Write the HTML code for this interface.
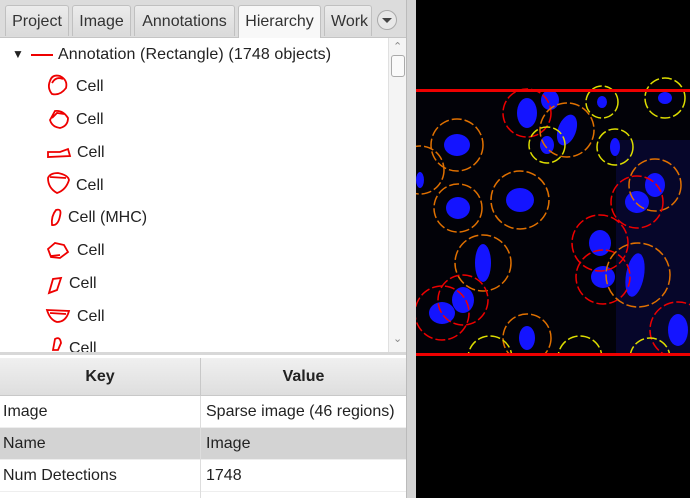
<!DOCTYPE html><html><head><style>
html,body{margin:0;width:690px;height:498px;overflow:hidden}
body{background:#000;font-family:"Liberation Sans",sans-serif;position:relative}
.l{position:absolute;left:0;top:0;width:406px;height:498px;background:#fff;overflow:hidden}
.tabs{position:absolute;left:0;top:0;width:406px;height:37px;background:#dcdcdc;border-bottom:1px solid #c4c4c4}
.tab{position:absolute;top:5px;height:31px;background:linear-gradient(#ececec,#dadada);border:1px solid #c0c0c0;border-bottom:none;border-radius:3px 3px 0 0;font-size:16px;color:#333;line-height:31px;text-align:center;box-sizing:border-box}
.tree{position:absolute;left:0;top:38px;width:388px;height:314px;overflow:hidden;font-size:16px;color:#222}
.r{position:absolute;white-space:nowrap}
.sb{position:absolute;left:388px;top:38px;width:18px;height:314px;background:#f4f4f4;border-left:1px solid #e0e0e0;box-sizing:border-box}
.tbl{position:absolute;left:0;top:355px;width:406px;height:143px;overflow:hidden;font-size:16px;color:#222}
.row{position:absolute;left:0;width:406px;height:32px;line-height:32px;border-bottom:1px solid #eee;box-sizing:border-box}
.c1{position:absolute;left:3px}.c2{position:absolute;left:206px}
.div{position:absolute;left:200px;top:0;width:1px;height:32px;background:#ddd}
</style></head><body>
<div class="l">
<div class="tabs">
<div class="tab" style="left:5px;width:64px">Project</div>
<div class="tab" style="left:72px;width:59px">Image</div>
<div class="tab" style="left:134px;width:101px">Annotations</div>
<div class="tab" style="left:238px;width:83px;background:#f8f8f8;height:33px">Hierarchy</div>
<div class="tab" style="left:324px;width:48px;text-align:left;padding-left:6px;overflow:hidden">Work</div>
<div style="position:absolute;left:377px;top:10px;width:20px;height:20px;border-radius:50%;border:1px solid #aaa;background:#e8e8e8;box-sizing:border-box"><div style="position:absolute;left:4px;top:7px;border-left:5px solid transparent;border-right:5px solid transparent;border-top:5px solid #444"></div></div>
</div>
<div class="tree">
<div class="r" style="left:12px;top:9px;font-size:12px">▼</div>
<div style="position:absolute;left:31px;top:16px;width:22px;height:2px;background:#e00"></div>
<div class="r" style="left:58px;top:8px;letter-spacing:0.1px">Annotation (Rectangle) (1748 objects)</div>
<svg style="position:absolute;left:0;top:0" width="80" height="314" fill="none" stroke="#e00" stroke-width="1.8">
<path d="M50 43 Q52 36 60 38 Q68 42 66 50 Q60 58 52 56 Q47 50 50 43Z M52 45 Q56 38 63 41"/>
<path d="M50 82 L55 73 Q63 72 68 80 Q68 88 60 90 Q52 89 50 82Z M52 80 L57 75 L64 76"/>
<path d="M48 119 L48 114 L60 114 L68 111 L70 118 L48 119Z"/>
<path d="M48 140 Q50 135 58 135 Q68 137 69 142 Q66 152 57 155 Q48 150 48 140Z M50 139 L66 140"/>
<path d="M52 187 Q51 178 56 172 Q62 170 60 178 Q58 188 52 187Z"/>
<path d="M48 211 L55 205 L64 207 L68 214 L60 220 L51 219Z M51 218 L60 217"/>
<path d="M49 255 L53 241 L61 240 L57 252 Z"/>
<path d="M47 272 L69 273 Q66 284 57 284 Q50 282 47 272Z M50 275 L66 276"/>
<path d="M53 312 L55 301 Q60 298 61 305 L58 312Z"/>
</svg>
<div class="r" style="left:76px;top:40px">Cell</div>
<div class="r" style="left:76px;top:73px">Cell</div>
<div class="r" style="left:77px;top:106px">Cell</div>
<div class="r" style="left:76px;top:139px">Cell</div>
<div class="r" style="left:68px;top:171px">Cell (MHC)</div>
<div class="r" style="left:77px;top:204px">Cell</div>
<div class="r" style="left:69px;top:237px">Cell</div>
<div class="r" style="left:77px;top:270px">Cell</div>
<div class="r" style="left:69px;top:302px">Cell</div>
</div>
<div class="sb"><div style="position:absolute;left:4px;top:2px;font-size:11px;color:#888">⌃</div>
<div style="position:absolute;left:2px;top:17px;width:12px;height:20px;border:1px solid #aaa;border-radius:3px;background:#fafafa"></div>
<div style="position:absolute;left:4px;top:294px;font-size:11px;color:#888">⌄</div></div>
<div style="position:absolute;left:0;top:352px;width:406px;height:3px;background:#d8d8d8"></div>
<div class="tbl">
<div class="row" style="top:3px;height:38px;line-height:37px;background:linear-gradient(#f0f0f0,#dedede);font-weight:bold;border-bottom:1px solid #c8c8c8"><div style="position:absolute;left:0;width:200px;text-align:center">Key</div><div style="position:absolute;left:201px;width:205px;text-align:center">Value</div><div class="div" style="height:37px;background:#c8c8c8"></div></div>
<div class="row" style="top:41px"><span class="c1">Image</span><span class="c2">Sparse image (46 regions)</span><div class="div"></div></div>
<div class="row" style="top:73px;background:#d3d3d3"><span class="c1">Name</span><span class="c2">Image</span><div class="div"></div></div>
<div class="row" style="top:105px"><span class="c1">Num Detections</span><span class="c2">1748</span><div class="div"></div></div>
<div class="row" style="top:137px;height:6px;border-bottom:none"><div class="div" style="height:6px"></div></div>
</div>
</div>
<div style="position:absolute;left:406px;top:0;width:10px;height:498px;background:#d4d4d4;border-left:1px solid #bbb;box-sizing:border-box"></div>
<svg style="position:absolute;left:416px;top:0" width="274" height="498">
<rect x="0" y="91" width="274" height="264" fill="#020208"/>
<rect x="200" y="140" width="74" height="215" fill="#06062a"/>
<g transform="translate(-416,0)">
<g fill="#1414ff">
<ellipse cx="527" cy="113" rx="10" ry="15"/><ellipse cx="550" cy="100" rx="9" ry="10"/><ellipse cx="567" cy="130" rx="9" ry="16" transform="rotate(20 567 130)"/><ellipse cx="547" cy="145" rx="7" ry="9"/>
<ellipse cx="457" cy="145" rx="13" ry="11"/><ellipse cx="602" cy="102" rx="5" ry="6"/><ellipse cx="615" cy="147" rx="5" ry="9"/><ellipse cx="665" cy="98" rx="7" ry="6"/>
<ellipse cx="655" cy="185" rx="10" ry="12"/><ellipse cx="637" cy="202" rx="12" ry="11"/><ellipse cx="458" cy="208" rx="12" ry="11"/><ellipse cx="520" cy="200" rx="14" ry="12"/>
<ellipse cx="600" cy="243" rx="11" ry="13"/><ellipse cx="603" cy="277" rx="12" ry="11"/><ellipse cx="635" cy="275" rx="9" ry="22" transform="rotate(10 635 275)"/><ellipse cx="483" cy="263" rx="8" ry="19"/>
<ellipse cx="463" cy="300" rx="11" ry="13"/><ellipse cx="442" cy="313" rx="13" ry="11"/><ellipse cx="527" cy="338" rx="8" ry="12"/><ellipse cx="678" cy="330" rx="10" ry="16"/><ellipse cx="420" cy="180" rx="4" ry="8"/>
</g>
<g fill="none" stroke-width="1.5" stroke-dasharray="10 3">
<circle cx="527" cy="113" r="24" stroke="#e00"/><circle cx="567" cy="130" r="27" stroke="#e07000"/><circle cx="547" cy="145" r="18" stroke="#dd0"/>
<circle cx="457" cy="145" r="26" stroke="#e07000"/><circle cx="602" cy="102" r="16" stroke="#dd0"/><circle cx="615" cy="147" r="18" stroke="#dd0"/><circle cx="665" cy="98" r="20" stroke="#dd0"/>
<circle cx="655" cy="185" r="26" stroke="#e07000"/><circle cx="637" cy="202" r="26" stroke="#e00"/><circle cx="458" cy="208" r="24" stroke="#e07000"/><circle cx="520" cy="200" r="29" stroke="#e07000"/>
<circle cx="600" cy="243" r="28" stroke="#e00"/><circle cx="603" cy="277" r="27" stroke="#e00"/><circle cx="638" cy="275" r="32" stroke="#e07000"/><circle cx="483" cy="263" r="28" stroke="#e07000"/>
<circle cx="463" cy="300" r="25" stroke="#e00"/><circle cx="442" cy="313" r="27" stroke="#e00"/><circle cx="527" cy="338" r="24" stroke="#e07000"/><circle cx="678" cy="330" r="28" stroke="#e00"/>
<circle cx="490" cy="358" r="22" stroke="#dd0"/><circle cx="580" cy="358" r="22" stroke="#dd0"/><circle cx="650" cy="358" r="20" stroke="#dd0"/><circle cx="420" cy="170" r="24" stroke="#e07000"/>
</g>
</g>
<rect x="0" y="89" width="274" height="3" fill="#e00"/>
<rect x="0" y="353" width="274" height="3" fill="#e00"/>
<rect x="0" y="356" width="274" height="142" fill="#000"/>
</svg>
</body></html>
